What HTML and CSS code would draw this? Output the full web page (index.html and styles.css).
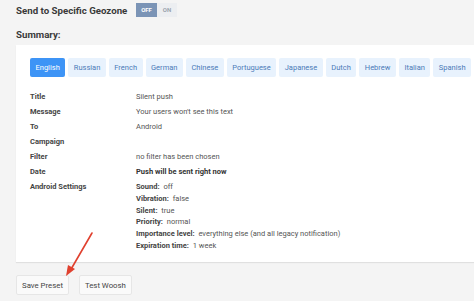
FILE: index.html
```html
<!DOCTYPE html>
<html lang="en">
<head>
    <meta charset="UTF-8">
    <meta name="viewport" content="width=device-width, initial-scale=1.0">
    <title>Push Summary</title>
    <link rel="stylesheet" href="styles.css">
</head>
<body>
    <div class="page">
        <div class="geozone">
            <span class="geozone-label">Send to Specific Geozone</span>
            <div class="toggle">
                <span class="toggle-off">OFF</span>
                <span class="toggle-on">ON</span>
            </div>
        </div>

        <h3 class="summary-title">Summary:</h3>

        <div class="card">
            <div class="tabs">
                <span class="tab active">English</span>
                <span class="tab">Russian</span>
                <span class="tab">French</span>
                <span class="tab">German</span>
                <span class="tab">Chinese</span>
                <span class="tab">Portuguese</span>
                <span class="tab">Japanese</span>
                <span class="tab">Dutch</span>
                <span class="tab">Hebrew</span>
                <span class="tab">Italian</span>
                <span class="tab">Spanish</span>
            </div>

            <div class="details">
                <div class="label">Title</div>
                <div class="value">Silent push</div>

                <div class="label">Message</div>
                <div class="value">Your users won't see this text</div>

                <div class="label">To</div>
                <div class="value">Android</div>

                <div class="label">Campaign</div>
                <div class="value"></div>

                <div class="label">Filter</div>
                <div class="value">no filter has been chosen</div>

                <div class="label">Date</div>
                <div class="value strong">Push will be sent right now</div>

                <div class="label">Android Settings</div>
                <div class="value settings">
                    <div><b>Sound:</b> off</div>
                    <div><b>Vibration:</b> false</div>
                    <div><b>Silent:</b> true</div>
                    <div><b>Priority:</b> normal</div>
                    <div><b>Importance level:</b> everything else (and all legacy notification)</div>
                    <div><b>Expiration time:</b> 1 week</div>
                </div>
            </div>
        </div>

        <div class="actions">
            <button class="btn">Save Preset</button>
            <button class="btn">Test Woosh</button>
        </div>
    </div>

    <svg class="arrow" width="40" height="50" viewBox="0 0 40 50">
        <line x1="34" y1="2" x2="12" y2="40" stroke="#e0412f" stroke-width="1.6" stroke-linecap="round"/>
        <path d="M8 45 L10 34 L17 38 Z" fill="#e0412f"/>
    </svg>
</body>
</html>
```

FILE: styles.css
```css
body {
    margin: 0;
    background: #f4f4f4;
    font-family: Roboto, "Liberation Sans", sans-serif;
    color: #333;
    overflow: hidden;
}

.page {
    padding: 3px 0 0 16px;
    width: 468px;
}

.geozone {
    display: flex;
    align-items: center;
    height: 14px;
}

.geozone-label {
    font-size: 9.7px;
    font-weight: bold;
    color: #3a3a3a;
    white-space: nowrap;
    flex: 0 0 120px;
}

.toggle {
    display: flex;
    font-size: 6px;
    font-weight: bold;
}

.toggle-off {
    background: #7b94b6;
    color: #fff;
    width: 21px;
    height: 14px;
    line-height: 14px;
    text-align: center;
}

.toggle-on {
    background: #eceef1;
    color: #9aa3ad;
    width: 20px;
    height: 14px;
    line-height: 14px;
    text-align: center;
}

.summary-title {
    font-size: 9.7px;
    font-weight: bold;
    color: #3a3a3a;
    margin: 12px 0 0 0;
    height: 14px;
}

.card {
    background: #fff;
    margin-top: 2px;
    padding: 13px 14px 0 14px;
    height: 204px;
    box-shadow: 0 1px 1px rgba(0, 0, 0, 0.08);
}

.tabs {
    display: flex;
    gap: 3px;
}

.tab {
    background: #e8f2fd;
    color: #4b7bb8;
    font-size: 7.5px;
    height: 19px;
    line-height: 19px;
    padding: 0 5.5px;
    border-radius: 2px;
}

.tab.active {
    background: #3d94f6;
    color: #fff;
}

.details {
    display: grid;
    grid-template-columns: 106px 1fr;
    grid-auto-rows: minmax(15px, auto);
    margin-top: 12px;
    font-size: 7.5px;
    line-height: 15px;
}

.label {
    font-weight: bold;
    color: #444;
}

.value {
    color: #555;
}

.value.strong {
    font-weight: bold;
    color: #333;
}

.settings {
    line-height: 11.8px;
    padding-top: 2px;
}

.settings b {
    color: #444;
    margin-right: 2px;
}

.actions {
    display: flex;
    gap: 10px;
    margin-top: 13px;
}

.btn {
    background: #fafafa;
    border: 1px solid #e6e6e6;
    border-radius: 2px;
    font-family: Roboto, "Liberation Sans", sans-serif;
    font-size: 7.8px;
    color: #444;
    height: 20px;
    padding: 0 5px;
}

.arrow {
    position: absolute;
    left: 58px;
    top: 231px;
}
```
